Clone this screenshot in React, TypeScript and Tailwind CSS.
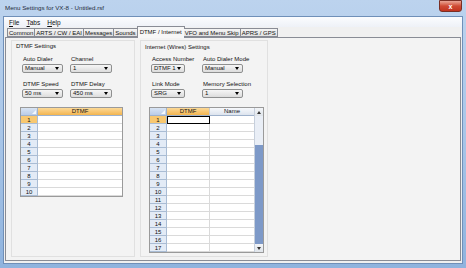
import React from "react";

const tabs = ["Common", "ARTS / CW / EAI", "Messages", "Sounds", "DTMF / Internet", "VFO and Menu Skip", "APRS / GPS"];

function Combo({ label, value, width, col }: { label: string; value: string; width: string; col: string }) {
  return (
    <div className={`${col} flex flex-col shrink-0`}>
      <div className="h-[7px] leading-[7px] pl-[1px]">{label}</div>
      <div className={`${width} h-[9px] mt-[1px] flex items-center rounded-[2px] border border-[#8e8f8f] bg-gradient-to-b from-[#f6f6f6] to-[#dcdcdc] pl-[2px]`}>
        <span className="flex-1 leading-[7px]">{value}</span>
        <span className="w-0 h-0 mr-[3px] border-l-[2px] border-r-[2px] border-t-[3px] border-l-transparent border-r-transparent border-t-black" />
      </div>
    </div>
  );
}

function RowHead({ n, active }: { n: number; active?: boolean }) {
  return (
    <div
      className={`w-[17px] h-[8px] leading-[8px] text-center border-r border-b border-[#a9bcd4] ${
        active ? "bg-[#f8c870]" : "bg-[#e3ebf6]"
      }`}
    >
      {n}
    </div>
  );
}

function Corner() {
  return (
    <div className="relative w-[17px] h-[7px] bg-gradient-to-b from-[#d9e4f3] to-[#b9cce8] border-r border-[#9fb2cc]">
      <span className="absolute right-[1px] bottom-[1px] w-0 h-0 border-l-[4px] border-b-[4px] border-l-transparent border-b-[#f4f8fd]" />
    </div>
  );
}

export default function App() {
  const left = Array.from({ length: 10 }, (_, i) => i + 1);
  const right = Array.from({ length: 17 }, (_, i) => i + 1);
  return (
    <div className="w-[466px] h-[268px] overflow-hidden flex flex-col whitespace-nowrap bg-gradient-to-b from-[#bcd3ee] via-[#a9c6e8] to-[#8fb3de] font-['Liberation_Sans',sans-serif] text-[6px] text-[#111]">
      {/* title bar */}
      <div className="h-[16px] flex items-start shrink-0">
        <div className="pl-[5px] pt-[4px] text-[6.2px] leading-[7px] text-[#1e2a3a]">Menu Settings for VX-8 - Untitled.rsf</div>
        <div className="ml-auto mr-[4px] w-[23px] h-[12px] rounded-b-[3px] border border-[#7a2e24] bg-gradient-to-b from-[#e9a596] via-[#cf4b35] to-[#c2331f] flex items-center justify-center text-white text-[7px] font-bold leading-none">
          x
        </div>
      </div>

      {/* client */}
      <div className="flex-1 mx-[3px] mb-[4px] flex flex-col bg-[#f0f0f0] border border-[#6f8fb8]">
        {/* menu bar */}
        <div className="h-[10px] flex items-center gap-[7px] pl-[5px] bg-gradient-to-b from-[#fbfcfe] to-[#eef1f7] text-[6.5px] leading-[7px]">
          <span><u>F</u>ile</span>
          <span><u>T</u>abs</span>
          <span><u>H</u>elp</span>
        </div>

        {/* tabs */}
        <div className="h-[10px] flex items-end pl-[3px] relative z-10">
          {tabs.map((t) => {
            const sel = t === "DTMF / Internet";
            return (
              <div
                key={t}
                className={`leading-[7px] border border-[#898c95] ${
                  sel
                    ? "h-[12px] -mb-[1px] bg-[#f7f7f7] border-b-0 pt-[2px] -mx-[1px] px-[2px]"
                    : "h-[9px] px-[1px] bg-gradient-to-b from-[#f4f4f4] to-[#e2e2e2] border-l-0 first:border-l pt-[1px]"
                }`}
              >
                {t}
              </div>
            );
          })}
        </div>

        {/* tab page */}
        <div className="flex-1 mx-[1px] mb-[2px] border border-[#898c95] bg-[#f3f3f3] flex gap-[5px] pl-[5px] pt-[2px] pb-[3px]">
          {/* DTMF settings */}
          <div className="w-[124px] border border-[#e0e0e0] flex flex-col">
            <div className="h-[10px] leading-[10px] pl-[4px]">DTMF Settings</div>
            <div className="mt-[5px] pl-[10px] flex">
              <Combo label="Auto Dialer" value="Manual" width="w-[41px]" col="w-[48px]" />
              <Combo label="Channel" value="1" width="w-[42px]" col="w-[48px]" />
            </div>
            <div className="mt-[8px] pl-[10px] flex">
              <Combo label="DTMF Speed" value="50 ms" width="w-[41px]" col="w-[48px]" />
              <Combo label="DTMF Delay" value="450 ms" width="w-[42px]" col="w-[48px]" />
            </div>
            <div className="mt-[9px] ml-[8px] w-[103px] border border-[#9a9a9a] bg-white">
              <div className="flex border-b border-[#9fb2cc]">
                <Corner />
                <div className="flex-1 h-[7px] leading-[7px] text-center bg-gradient-to-b from-[#fcd996] to-[#f3b54e]">DTMF</div>
              </div>
              {left.map((n) => (
                <div key={n} className="flex">
                  <RowHead n={n} active={n === 1} />
                  <div className="flex-1 h-[8px] border-b border-[#dadada]" />
                </div>
              ))}
            </div>
          </div>

          {/* Internet settings */}
          <div className="w-[128px] border border-[#e0e0e0] flex flex-col">
            <div className="h-[10px] leading-[10px] pl-[4px] pt-[1px]">Internet (Wires) Settings</div>
            <div className="mt-[5px] pl-[10px] flex">
              <Combo label="Access Number" value="DTMF 1" width="w-[34px]" col="w-[51px]" />
              <Combo label="Auto Dialer Mode" value="Manual" width="w-[41px]" col="w-[52px]" />
            </div>
            <div className="mt-[8px] pl-[10px] flex">
              <Combo label="Link Mode" value="SRG" width="w-[34px]" col="w-[51px]" />
              <Combo label="Memory Selection" value="1" width="w-[41px]" col="w-[52px]" />
            </div>
            <div className="mt-[9px] ml-[8px] w-[115px] border border-[#9a9a9a] bg-white flex">
              <div className="flex-1">
                <div className="flex border-b border-[#9fb2cc]">
                  <Corner />
                  <div className="w-[43px] h-[7px] leading-[7px] text-center bg-gradient-to-b from-[#fcd996] to-[#f3b54e] border-r border-[#c9c9c9]">DTMF</div>
                  <div className="flex-1 h-[7px] leading-[7px] text-center bg-gradient-to-b from-[#f7f9fc] to-[#dde4ee]">Name</div>
                </div>
                {right.map((n) => (
                  <div key={n} className="flex">
                    <RowHead n={n} active={n === 1} />
                    <div
                      className={`w-[43px] h-[8px] border-b border-r ${
                        n === 1 ? "border border-black" : "border-[#dadada]"
                      }`}
                    />
                    <div className="flex-1 h-[8px] border-b border-[#dadada]" />
                  </div>
                ))}
              </div>
              <div className="w-[9px] flex flex-col bg-[#7d99c8] border-l border-[#c6cfdc]">
                <div className="h-[8px] bg-gradient-to-b from-[#f3f5f8] to-[#dfe4ea] flex items-center justify-center">
                  <span className="w-0 h-0 border-l-[2px] border-r-[2px] border-b-[3px] border-l-transparent border-r-transparent border-b-[#333]" />
                </div>
                <div className="h-[29px] bg-[#e9eef6]" />
                <div className="flex-1" />
                <div className="h-[8px] bg-gradient-to-b from-[#f3f5f8] to-[#dfe4ea] flex items-center justify-center">
                  <span className="w-0 h-0 border-l-[2px] border-r-[2px] border-t-[3px] border-l-transparent border-r-transparent border-t-[#333]" />
                </div>
              </div>
            </div>
          </div>
        </div>
      </div>
    </div>
  );
}
